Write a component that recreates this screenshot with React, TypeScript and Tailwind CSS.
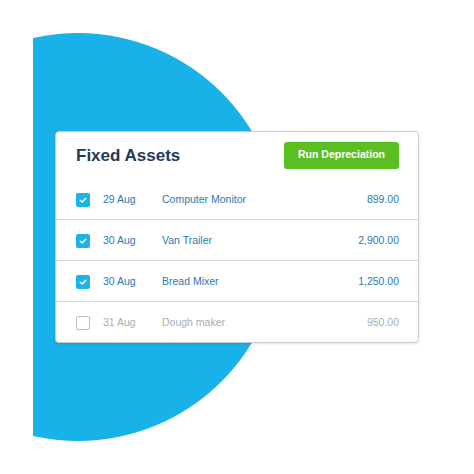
const rows = [
  { date: "29 Aug", name: "Computer Monitor", amount: "899.00", checked: true },
  { date: "30 Aug", name: "Van Trailer", amount: "2,900.00", checked: true },
  { date: "30 Aug", name: "Bread Mixer", amount: "1,250.00", checked: true },
  { date: "31 Aug", name: "Dough maker", amount: "950.00", checked: false },
];

function Checkbox({ checked }: { checked: boolean }) {
  if (!checked) {
    return <div className="w-[14px] h-[14px] rounded-[2px] border border-[#b9bec3] bg-white" />;
  }
  return (
    <div className="w-[14px] h-[14px] rounded-[2px] bg-[#1ab4e8] flex items-center justify-center">
      <svg width="10" height="10" viewBox="0 0 10 10" fill="none">
        <polyline
          points="2.2,5.2 4.2,7 7.8,3.2"
          stroke="white"
          strokeWidth="1.4"
          strokeLinecap="round"
          strokeLinejoin="round"
        />
      </svg>
    </div>
  );
}

export default function App() {
  return (
    <div className="relative w-[474px] h-[474px] bg-white overflow-hidden font-['Liberation_Sans',Arial,sans-serif]">
      {/* blue backdrop circle, cut flat on the left */}
      <div className="absolute left-[33px] top-0 w-[441px] h-[474px] overflow-hidden">
        <div className="absolute left-[-158px] top-[33px] w-[406px] h-[408px] rounded-full bg-[#19b2e8]" />
      </div>

      <div className="relative ml-[55px] mt-[131px] w-[364px] rounded-[4px] border border-[#c7cbcf] bg-white shadow-[0_1px_3px_rgba(0,0,0,0.12)]">
        <div className="h-[46px] flex items-center justify-between pl-[20px] pr-[19px]">
          <h1 className="text-[17px] font-bold text-[#1f3a5c] leading-none">Fixed Assets</h1>
          <button className="w-[115px] h-[27px] rounded-[3px] bg-[#5bbf21] text-white text-[10.5px] font-bold">
            Run Depreciation
          </button>
        </div>

        {rows.map((r, i) => (
          <div
            key={i}
            className={`h-[41px] flex items-center pt-[2px] pl-[20px] pr-[19px] text-[10.5px] ${
              i > 0 ? "border-t border-[#d6d9dc]" : ""
            } ${r.checked ? "text-[#2c78b2]" : "text-[#a9aeb3]"}`}
          >
            <div className="w-[27px]">
              <Checkbox checked={r.checked} />
            </div>
            <div className="w-[59px]">{r.date}</div>
            <div className="flex-1">{r.name}</div>
            <div className="text-right">{r.amount}</div>
          </div>
        ))}
      </div>
    </div>
  );
}
